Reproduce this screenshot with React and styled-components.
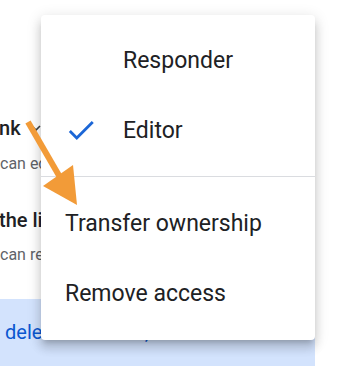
import React from 'react';
import styled, { createGlobalStyle } from 'styled-components';

const GlobalStyle = createGlobalStyle`
  html, body {
    margin: 0;
    padding: 0;
    background: #ffffff;
  }
  body {
    font-family: Roboto, "Liberation Sans", Arial, sans-serif;
  }
`;

const Page = styled.div`
  position: relative;
  width: 344px;
  height: 366px;
  overflow: hidden;
  background: #ffffff;
`;

const Content = styled.div`
  width: 315px;
  height: 100%;
  box-sizing: border-box;
  padding-top: 116px;
  display: flex;
  flex-direction: column;
  white-space: nowrap;
`;

const Option = styled.div`
  display: flex;
  flex-direction: column;
  gap: 13.5px;
  padding-bottom: 34px;
`;

const OptionTitle = styled.div`
  display: flex;
  align-items: center;
  gap: 9px;
  margin-left: -1px;
  font-size: 20px;
  line-height: 24px;
  font-weight: 500;
  color: #202124;
`;

const OptionSub = styled.div`
  font-size: 16px;
  line-height: 20px;
  color: #5f6368;
`;

const Footer = styled.div`
  margin-top: auto;
  height: 69px;
  box-sizing: border-box;
  padding: 21px 0 0 5px;
  background: #d3e3fd;
  color: #0b57d0;
  font-size: 20px;
  line-height: 24px;
`;

const Menu = styled.div`
  position: absolute;
  top: 15px;
  left: 41px;
  width: 274px;
  box-sizing: border-box;
  padding: 10px 0 12px;
  background: #ffffff;
  border-radius: 4px;
  box-shadow: 0 8px 10px 1px rgba(0, 0, 0, 0.12), 0 3px 14px 2px rgba(0, 0, 0, 0.1),
    0 5px 5px -3px rgba(0, 0, 0, 0.16);
`;

const MenuItem = styled.div`
  height: 70px;
  display: flex;
  align-items: center;
  padding-left: 24px;
  font-size: 23px;
  color: #202124;
  white-space: nowrap;
`;

const CheckSlot = styled.div`
  width: 58px;
  flex: none;
  display: flex;
  align-items: center;
  svg {
    margin-left: -1px;
  }
`;

const Divider = styled.div`
  height: 1px;
  margin: 11px 0;
  background: #dadce0;
`;

const Overlay = styled.svg`
  position: absolute;
  inset: 0;
  pointer-events: none;
`;

const Caret = () => (
  <svg width="12" height="12" viewBox="0 0 12 12">
    <path d="M2 4 L6 8 L10 4" fill="none" stroke="#3c4043" strokeWidth="1.6" />
  </svg>
);

const Check = () => (
  <svg width="34" height="34" viewBox="0 0 24 24">
    <path d="M9 16.17L4.83 12l-1.42 1.41L9 19 21 7l-1.41-1.41z" fill="#1b66d6" />
  </svg>
);

const items = [
  { label: 'Responder', slot: true },
  { label: 'Editor', slot: true, checked: true },
  { divider: true },
  { label: 'Transfer ownership' },
  { label: 'Remove access' },
];

export default function App() {
  return (
    <>
      <GlobalStyle />
      <Page>
        <Content>
          <Option>
            <OptionTitle>
              nk
              <Caret />
            </OptionTitle>
            <OptionSub>can edit</OptionSub>
          </Option>
          <Option>
            <OptionTitle>the link</OptionTitle>
            <OptionSub>can respond</OptionSub>
          </Option>
          <Footer>delete this form, and all</Footer>
        </Content>

        <Menu>
          {items.map((item, i) =>
            item.divider ? (
              <Divider key={i} />
            ) : (
              <MenuItem key={i}>
                {item.slot && <CheckSlot>{item.checked && <Check />}</CheckSlot>}
                {item.label}
              </MenuItem>
            )
          )}
        </Menu>

        <Overlay width="344" height="366" viewBox="0 0 344 366">
          <line x1="28" y1="122" x2="61" y2="179" stroke="#f29b38" strokeWidth="6" />
          <polygon points="43,186 73,165 77,205" fill="#f29b38" />
        </Overlay>
      </Page>
    </>
  );
}
